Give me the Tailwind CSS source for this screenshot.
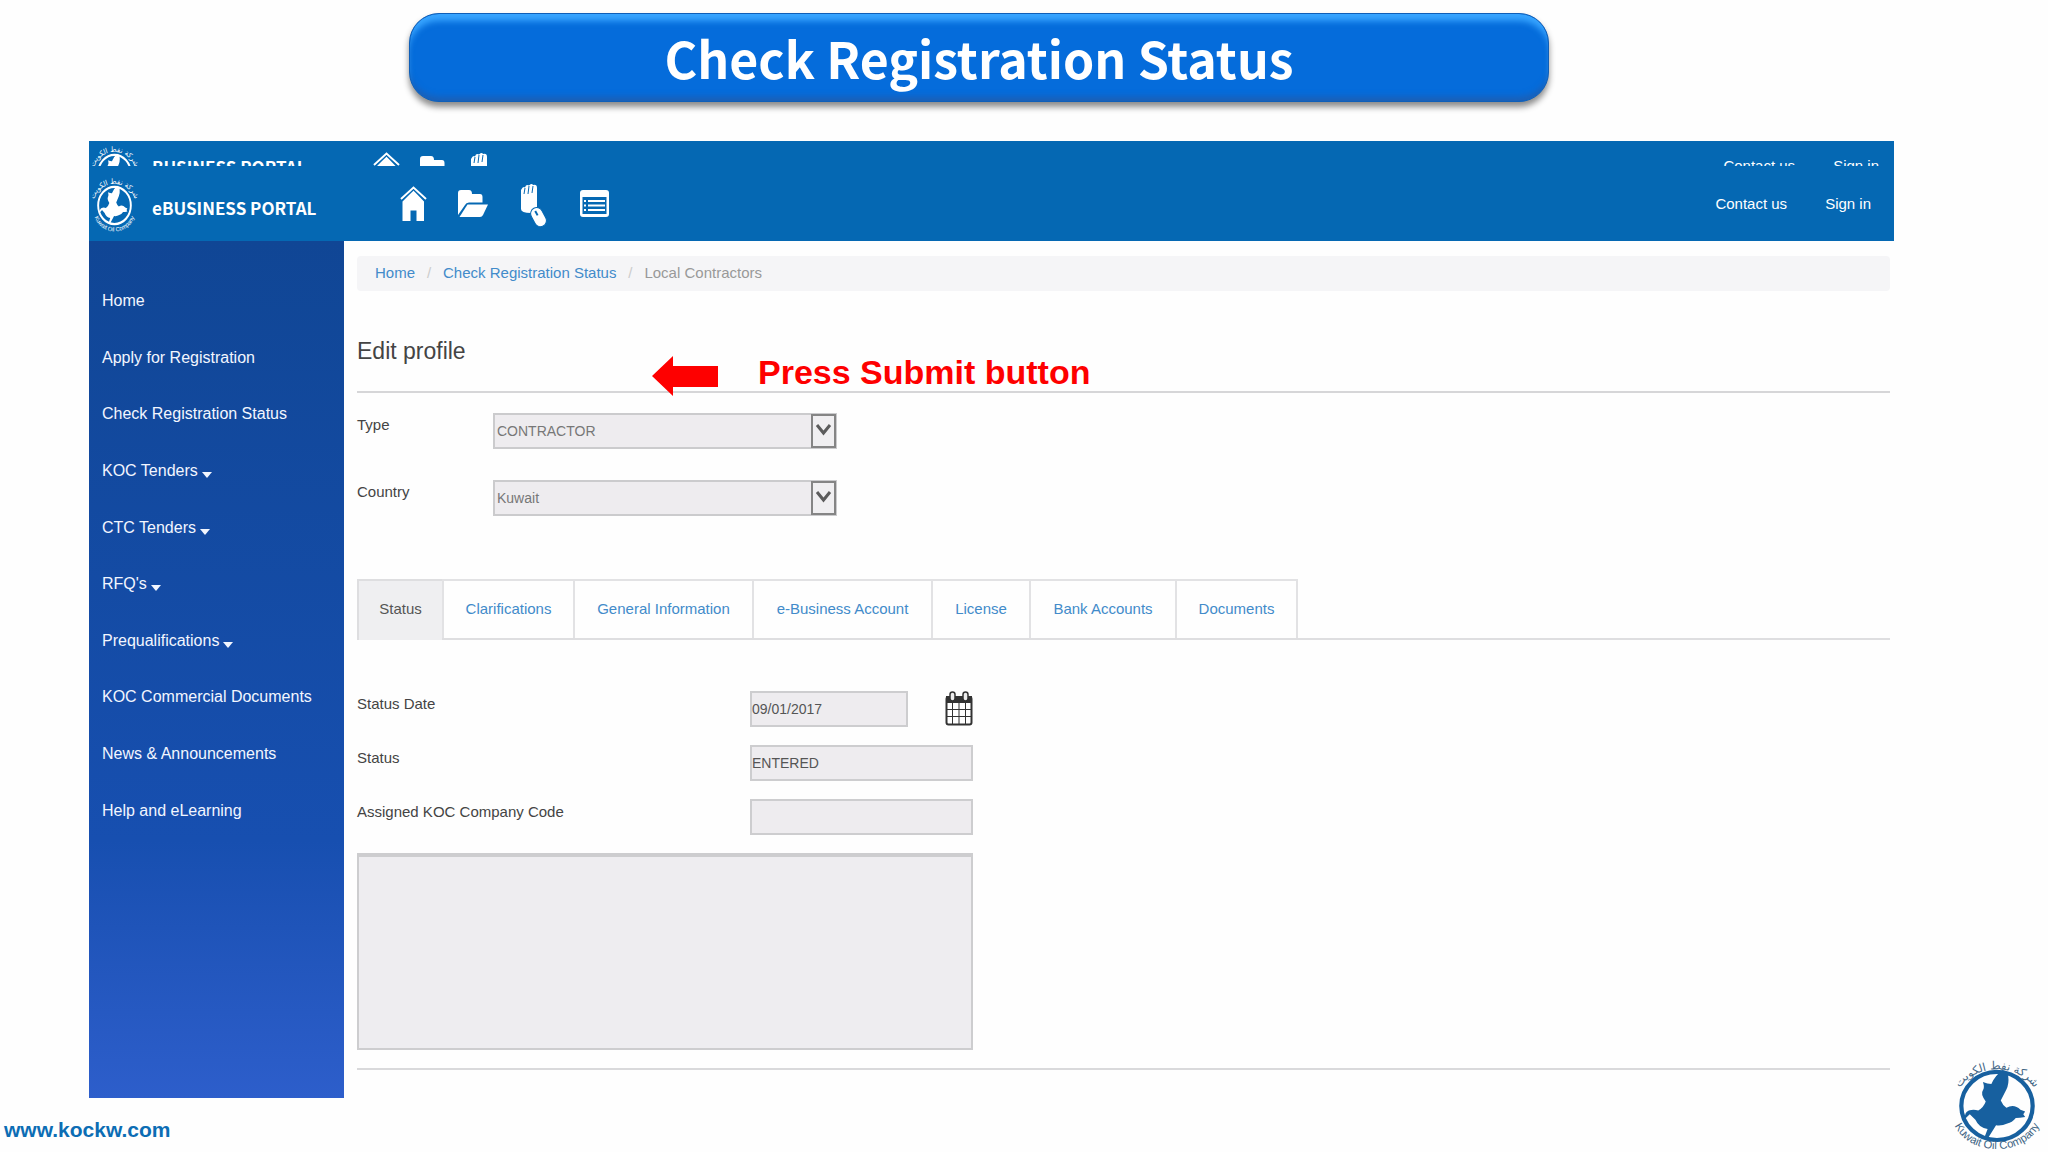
<!DOCTYPE html>
<html lang="en">
<head>
<meta charset="utf-8">
<title>Check Registration Status</title>
<script src="https://cdn.jsdelivr.net/npm/@tailwindcss/browser@4"></script>
</head>
<body class="relative flex min-h-screen flex-col bg-[#fefefe] font-['Liberation_Sans',sans-serif] text-[15px] text-[#444]">

<svg class="hidden" aria-hidden="true">
  <symbol id="koc" viewBox="0 0 100 100" preserveAspectRatio="none">
    <ellipse cx="50" cy="51" rx="38" ry="37" fill="none" stroke="currentColor" stroke-width="4.500"/>
    <path fill="currentColor" d="M35 25 Q40 27 44 27 Q48 18 56 12 Q61 14 62 19 Q63 27 60 33 L54 45 Q56 50 60 53 Q68 48 75 55 L80 57 L78 60 L80 63 Q74 64 70 64 Q66 69 61 70 Q55 73 49 72 L41 85 L36 87 L40 76 Q31 75 27 66 L21 60 L16 65 Q15 58 20 56 Q25 54 30 56 Q36 52 38 46 Q32 38 35 34 Q37 31 35 25Z"/>
  </symbol>
  <symbol id="home" viewBox="0 0 27 35">
    <path fill="currentColor" d="M13.500 4.500 L24 15.500 V35 H16.500 V24.500 H10.500 V35 H2.500 V15.500Z"/>
    <path fill="none" stroke="currentColor" stroke-width="2" d="M1 13 L13.500 1.500 L26 13"/>
    <path fill="none" stroke="#0568b3" stroke-width="1" d="M2 14.500 L13.500 3.800 L25 14.500"/>
  </symbol>
  <symbol id="folder" viewBox="0 0 30 27">
    <path fill="currentColor" d="M0 25 V3 Q0 0 3 0 H11 Q14 0 14 4 H22 Q24.500 4 24.500 7 V12.500 H11 Q8 12.500 7 15Z"/>
    <path fill="currentColor" d="M9.500 14.500 H30 L25 25 Q24 27 22 27 H1.500Z"/>
  </symbol>
  <symbol id="hand" viewBox="0 0 28 43">
    <path fill="currentColor" d="M1 6 Q3 2 5 3.500 Q6 0 9 1.500 Q12 -1 13 1 Q17 0 17 4 V27 L11 29 Q1 29 1 25Z"/>
    <path fill="none" stroke="#0568b3" d="M5 4 L4 10 M9 2 L8 10 M13 2 L12 9"/>
    <g transform="rotate(-28 19 34)">
      <rect x="13" y="23" width="12" height="20" rx="6" fill="currentColor" stroke="#0568b3"/>
      <path stroke="#0568b3" stroke-width="2" d="M19 26 V31"/>
    </g>
  </symbol>
  <symbol id="list" viewBox="0 0 29 27">
    <rect width="29" height="27" rx="3" fill="currentColor"/>
    <rect x="2.500" y="7" width="24" height="17" fill="#0568b3"/>
    <path stroke="currentColor" stroke-width="2" d="M4 11 H6 M8 11 H25 M4 15.500 H6 M8 15.500 H25 M4 20 H6 M8 20 H25"/>
  </symbol>
  <symbol id="caret" viewBox="0 0 10 6"><path fill="currentColor" d="M0 0 H10 L5 6Z"/></symbol>
</svg>

<h1 class="mt-[13px] mr-[499px] ml-[409px] flex h-[89px] items-center justify-center rounded-[30px] border border-[#0f5fb8] bg-[#056cdb] pb-[2px] font-['Noto_Sans_CJK_SC','Open_Sans',sans-serif] text-[50px] leading-none font-bold whitespace-nowrap text-white shadow-[inset_0_9px_6px_-2px_#38a5ff,inset_0_-7px_6px_-3px_#1d5fb4,0_5px_6px_rgba(0,0,0,0.45)]">Check Registration Status</h1>

<div class="mt-[39px] mr-[154px] ml-[89px]">
  <header class="bg-[#0568b3] text-white">
    <div class="flex h-[25px] items-start overflow-hidden pl-1" aria-hidden="true">
      <svg class="mt-[3px] h-[56px] w-[43px] shrink-0 overflow-visible" viewBox="0 0 100 120" preserveAspectRatio="none"><defs><path id="sTop" d="M2 60 A48 43 0 0 1 98 60"/></defs><use href="#koc" y="8" width="100" height="108"/><text fill="currentColor" font-family="DejaVu Sans" font-size="16" text-anchor="middle" direction="rtl"><textPath href="#sTop" startOffset="50%">شركة نفط الكويت</textPath></text></svg>
      <span class="mt-3 ml-4 w-[221px] font-['Noto_Sans_CJK_SC',sans-serif] text-[17px] leading-7 font-bold whitespace-nowrap">BUSINESS PORTAL</span>
      <svg class="mt-[11px] h-[35px] w-[27px] shrink-0"><use href="#home"/></svg>
      <svg class="mt-[15px] ml-5 h-[27px] w-[30px] shrink-0"><use href="#folder"/></svg>
      <svg class="mt-3 ml-5 h-[43px] w-[28px] shrink-0"><use href="#hand"/></svg>
      <span class="mt-[13px] mr-[38px] ml-auto leading-6">Contact us</span>
      <span class="mt-[13px] mr-[15px] leading-6">Sign in</span>
    </div>
    <div class="flex h-[75px] items-center pl-1">
      <svg class="h-[56px] w-[43px] shrink-0 overflow-visible" viewBox="0 0 100 120" preserveAspectRatio="none"><defs><path id="hTop" d="M2 60 A48 43 0 0 1 98 60"/><path id="hBottom" d="M0 70 A50 49 0 0 0 100 70"/></defs><use href="#koc" y="8" width="100" height="108"/><g fill="currentColor" text-anchor="middle"><text font-family="DejaVu Sans" font-size="16" direction="rtl"><textPath href="#hTop" startOffset="50%">شركة نفط الكويت</textPath></text><text font-family="Liberation Sans" font-size="13"><textPath href="#hBottom" startOffset="50%">Kuwait Oil Company</textPath></text></g></svg>
      <span class="mt-2 ml-4 w-[248px] font-['Noto_Sans_CJK_SC',sans-serif] text-[17px] leading-7 font-bold whitespace-nowrap">eBUSINESS PORTAL</span>
      <nav class="flex items-center text-white" aria-label="Shortcuts">
        <a href="#" aria-label="Home"><svg class="h-[35px] w-[27px]"><use href="#home"/></svg></a>
        <a href="#" class="ml-[31px]" aria-label="Documents"><svg class="h-[27px] w-[30px]"><use href="#folder"/></svg></a>
        <a href="#" class="mt-1 ml-8" aria-label="Register"><svg class="h-[43px] w-[28px]"><use href="#hand"/></svg></a>
        <a href="#" class="ml-8" aria-label="News"><svg class="h-[27px] w-[29px]"><use href="#list"/></svg></a>
      </nav>
      <a href="#" class="mr-[38px] ml-auto leading-6">Contact us</a>
      <a href="#" class="mr-[23px] leading-6">Sign in</a>
    </div>
  </header>

  <div class="flex">
    <nav class="w-[255px] shrink-0 bg-linear-to-b from-[#104695] via-[#174fb0] via-70% to-[#2d5ecb] pt-8 pl-[13px] text-[16px] text-[#f2f6ff]" aria-label="Main">
      <ul class="grid h-[566px] grid-rows-10 items-center leading-6">
        <li><a href="#">Home</a></li>
        <li><a href="#">Apply for Registration</a></li>
        <li><a href="#">Check Registration Status</a></li>
        <li><a href="#" class="flex items-center gap-1">KOC Tenders <svg class="mt-2 h-[6px] w-[10px]"><use href="#caret"/></svg></a></li>
        <li><a href="#" class="flex items-center gap-1">CTC Tenders <svg class="mt-2 h-[6px] w-[10px]"><use href="#caret"/></svg></a></li>
        <li><a href="#" class="flex items-center gap-1">RFQ's <svg class="mt-2 h-[6px] w-[10px]"><use href="#caret"/></svg></a></li>
        <li><a href="#" class="flex items-center gap-1">Prequalifications <svg class="mt-2 h-[6px] w-[10px]"><use href="#caret"/></svg></a></li>
        <li><a href="#">KOC Commercial Documents</a></li>
        <li><a href="#">News &amp; Announcements</a></li>
        <li><a href="#">Help and eLearning</a></li>
      </ul>
    </nav>

    <main class="min-w-0 flex-1 pt-[15px] pr-1 pb-[28px] pl-[13px]">
      <nav class="flex h-[35px] items-center rounded bg-[#f5f5f7] pl-[18px] text-[#999]" aria-label="Breadcrumb">
        <a href="#" class="text-[#428bca]">Home</a><span class="w-7 text-center text-[#ccc]">/</span><a href="#" class="text-[#428bca]">Check Registration Status</a><span class="w-7 text-center text-[#ccc]">/</span><span>Local Contractors</span>
      </nav>

      <div class="relative mt-[42px] h-[60px] border-b-2 border-[#d6d6d8]">
        <h2 class="text-[23px] leading-9">Edit profile</h2>
        <div class="absolute top-[15px] left-[295px] flex items-center gap-10 text-[#fe0000]">
          <svg class="mt-2 h-[40px] w-[66px]" viewBox="0 0 66 40" fill="currentColor"><path d="M0 20 L21 0 V10 H66 V31 H21 V40Z"/></svg>
          <strong class="text-[34px] leading-10 whitespace-nowrap">Press Submit button</strong>
        </div>
      </div>

      <form>
        <div class="mt-5 grid w-[480px] grid-cols-[136px_344px] gap-y-[31px]">
          <label for="type" class="leading-6">Type</label>
          <div class="relative">
            <select id="type" disabled class="block h-[36px] w-full appearance-none border-2 border-[#cbcbcd] bg-[#eeecef] pl-[2px] text-[14px] text-[#777] opacity-100"><option>CONTRACTOR</option></select>
            <svg class="pointer-events-none absolute top-px right-px h-[34px] w-[25px]" viewBox="0 0 25 34"><rect x="1" y="1" width="23" height="32" fill="#f0eff1" stroke="#858585" stroke-width="2"/><path fill="none" stroke="#5c5c5c" stroke-width="3" d="M6 11 L12.500 19 L19 11"/></svg>
          </div>
          <label for="country" class="leading-6">Country</label>
          <div class="relative">
            <select id="country" disabled class="block h-[36px] w-full appearance-none border-2 border-[#cbcbcd] bg-[#eeecef] pl-[2px] text-[14px] text-[#777] opacity-100"><option>Kuwait</option></select>
            <svg class="pointer-events-none absolute top-px right-px h-[34px] w-[25px]" viewBox="0 0 25 34"><rect x="1" y="1" width="23" height="32" fill="#f0eff1" stroke="#858585" stroke-width="2"/><path fill="none" stroke="#5c5c5c" stroke-width="3" d="M6 11 L12.500 19 L19 11"/></svg>
          </div>
        </div>

        <div class="mt-[63px] flex h-[61px] border-b-2 border-[#dedee0]" role="tablist">
          <button type="button" role="tab" aria-selected="true" class="-mb-[2px] w-[85px] border-t-2 border-l-2 border-[#dedee0] bg-[#efeff1] pb-[2px] text-[#555]">Status</button>
          <button type="button" role="tab" class="w-[131px] border-t-2 border-l-2 border-[#e2e2e4] text-[#428bca]">Clarifications</button>
          <button type="button" role="tab" class="w-[179px] border-t-2 border-l-2 border-[#e2e2e4] text-[#428bca]">General Information</button>
          <button type="button" role="tab" class="w-[179px] border-t-2 border-l-2 border-[#e2e2e4] text-[#428bca]">e-Business Account</button>
          <button type="button" role="tab" class="w-[98px] border-t-2 border-l-2 border-[#e2e2e4] text-[#428bca]">License</button>
          <button type="button" role="tab" class="w-[146px] border-t-2 border-l-2 border-[#e2e2e4] text-[#428bca]">Bank Accounts</button>
          <button type="button" role="tab" class="w-[123px] border-x-2 border-t-2 border-[#e2e2e4] text-[#428bca]">Documents</button>
        </div>

        <div class="mt-[51px] grid w-[616px] grid-cols-[393px_223px] gap-y-[18px]">
          <label for="date" class="leading-[26px]">Status Date</label>
          <div class="flex items-start justify-between">
            <input id="date" value="09/01/2017" disabled class="h-[36px] w-[158px] border-2 border-[#cdcdcf] bg-[#eeecef] text-[14px] text-[#555]">
            <button type="button" aria-label="Pick a date"><svg class="h-[35px] w-[28px]" viewBox="0 0 28 35"><rect x="1.500" y="6" width="25" height="27.500" rx="2" fill="#fff" stroke="#333" stroke-width="2"/><path fill="#333" d="M1 5 H27 V12 H1Z"/><path stroke="#333" stroke-width="1" d="M7.500 12 V33 M14 12 V33 M20.500 12 V33 M2 18.500 H26 M2 25.500 H26"/><rect x="5" y="1" width="5" height="9" rx="2.500" fill="#eee" stroke="#333" stroke-width="1.500"/><rect x="18" y="1" width="5" height="9" rx="2.500" fill="#eee" stroke="#333" stroke-width="1.500"/></svg></button>
          </div>
          <label for="status" class="leading-[26px]">Status</label>
          <input id="status" value="ENTERED" disabled class="h-[36px] border-2 border-[#cdcdcf] bg-[#eeecef] text-[14px] text-[#555]">
          <label for="code" class="leading-[26px]">Assigned KOC Company Code</label>
          <input id="code" disabled class="h-[36px] border-2 border-[#cdcdcf] bg-[#eeecef] text-[14px] text-[#555]">
        </div>
        <textarea disabled aria-label="Remarks" class="mt-[18px] block h-[197px] w-[616px] resize-none border-2 border-t-4 border-[#cdcdcf] bg-[#eeedf0]"></textarea>
      </form>
      <hr class="mt-[18px] border-t-2 border-[#d9d9db]">
    </main>
  </div>
</div>

<footer class="flex items-start pt-[20px] pl-1">
  <a href="#" class="text-[21px] leading-6 font-bold text-[#0c6db4]">www.kockw.com</a>
  <svg class="absolute right-1 bottom-0 h-[92px] w-[94px] overflow-visible text-[#17609f]" viewBox="0 0 100 98"><defs><path id="fTop" d="M4 50 A46 40 0 0 1 96 50"/><path id="fBottom" d="M2 57 A48 38 0 0 0 98 57"/></defs><use href="#koc" y="-1" width="100" height="98"/><g fill="#3f6584" text-anchor="middle"><text font-family="DejaVu Sans" font-size="12" direction="rtl"><textPath href="#fTop" startOffset="50%">شركة نفط الكويت</textPath></text><text font-family="Liberation Sans" font-size="12"><textPath href="#fBottom" startOffset="50%">Kuwait Oil Company</textPath></text></g></svg>
</footer>
</body>
</html>
